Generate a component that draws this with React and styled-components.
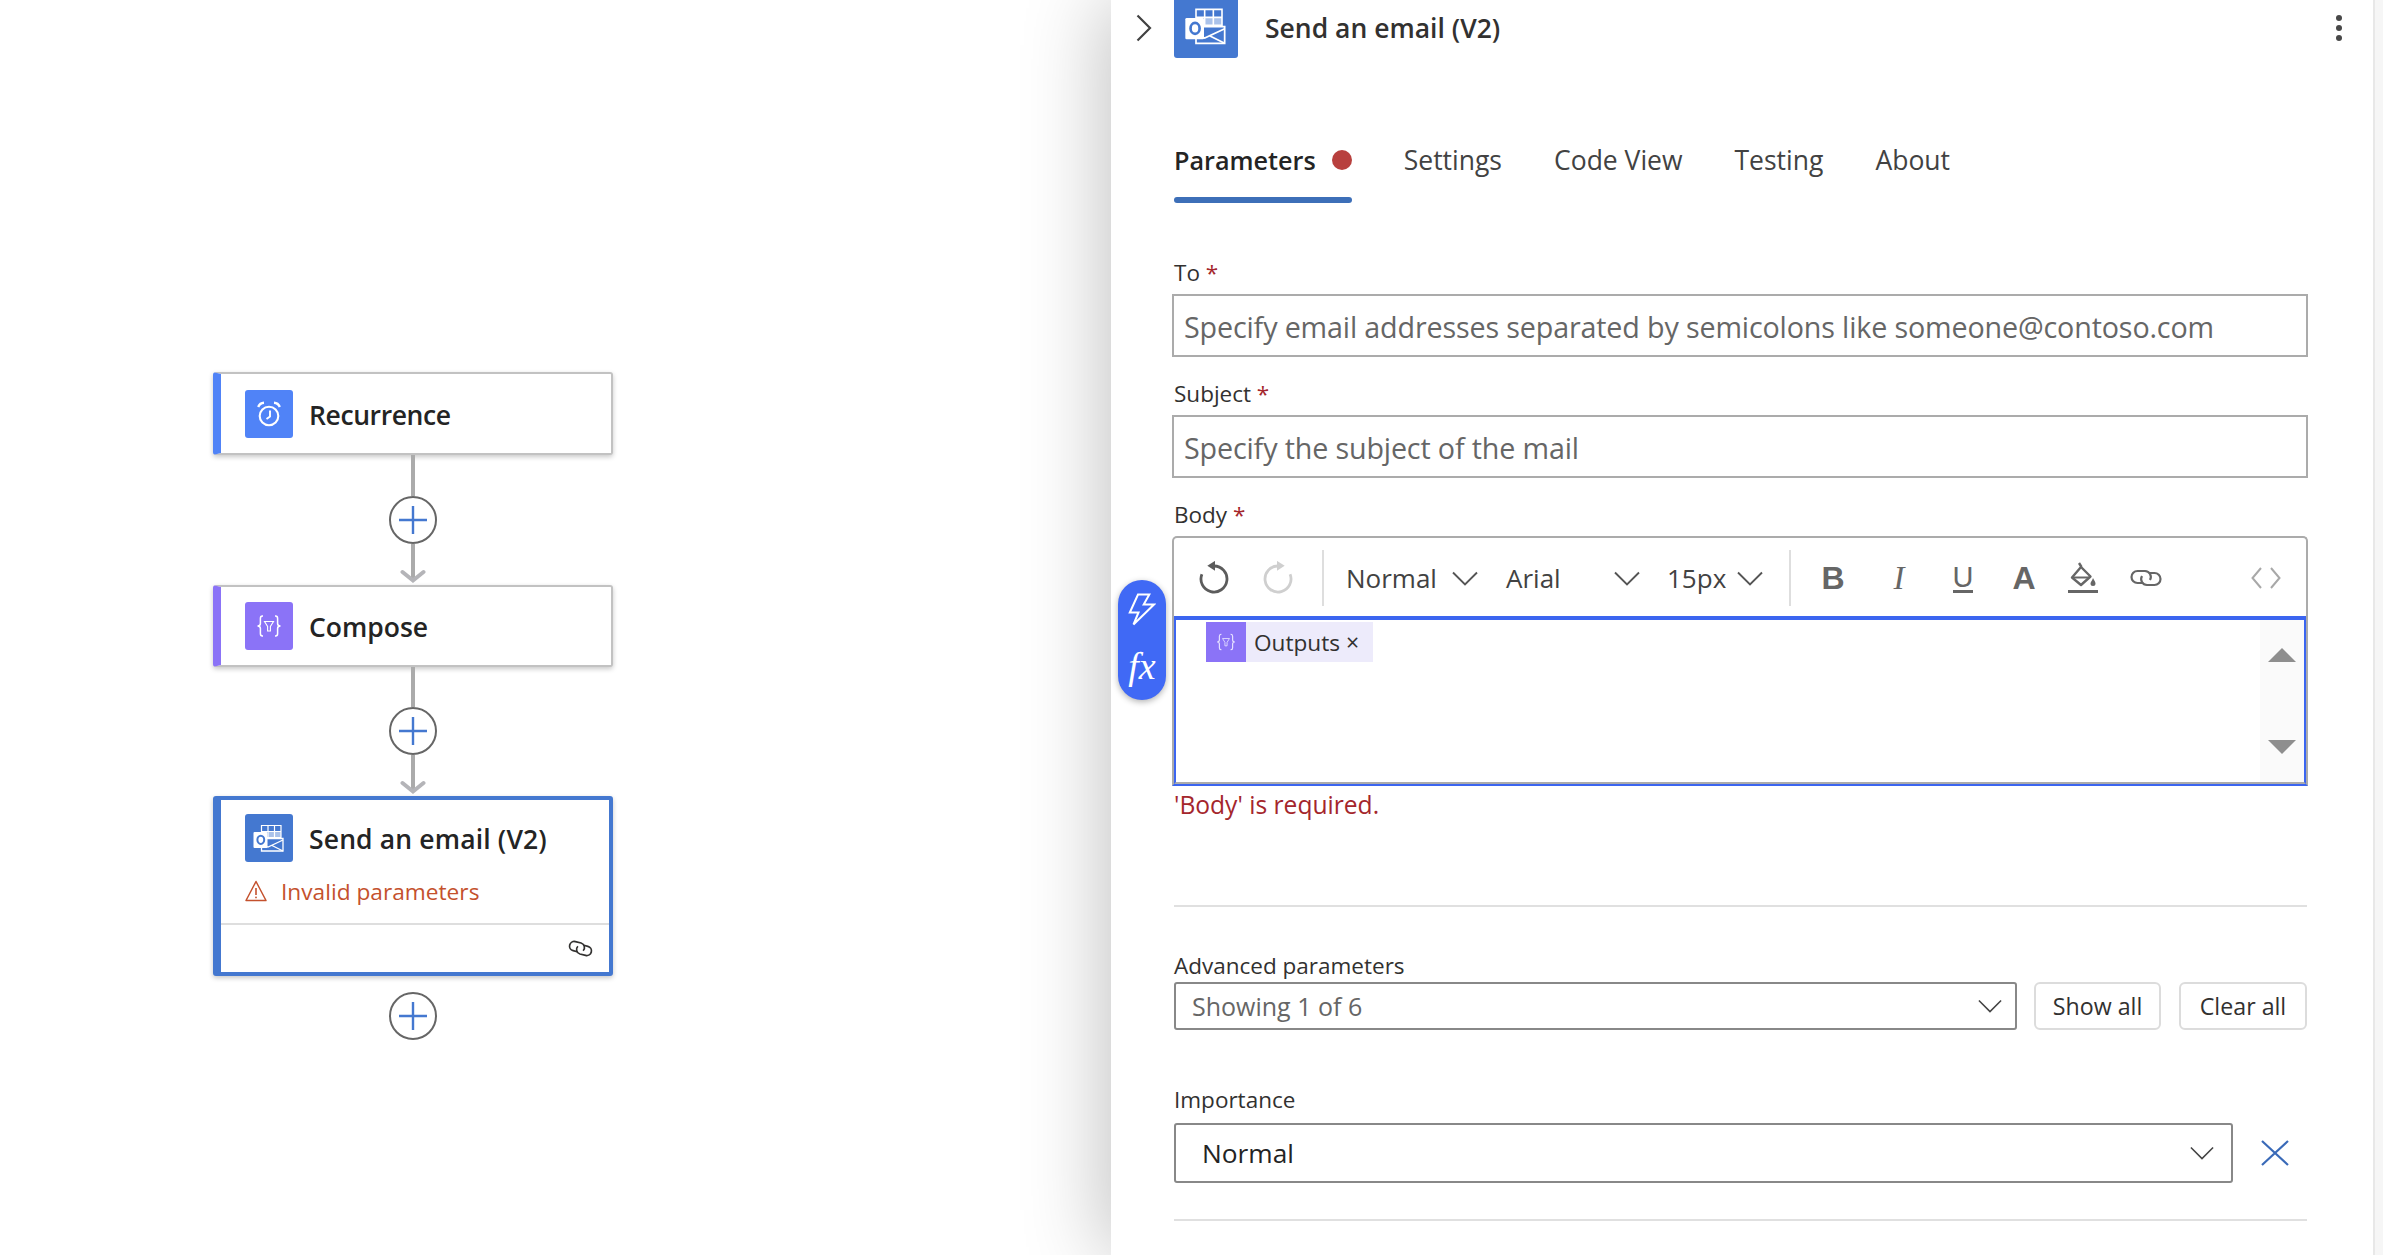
import React from 'react'
import styled, { createGlobalStyle } from 'styled-components'

const GlobalStyle = createGlobalStyle`
  html, body {
    margin: 0;
    padding: 0;
    background: #ffffff;
  }
  body {
    font-family: "Open Sans", "Noto Sans", sans-serif;
    color: #242424;
  }
`

const Page = styled.div`
  display: flex;
  width: 2383px;
  height: 1255px;
  overflow: hidden;
  background: #ffffff;
`

/* left side: the flow designer */
const Canvas = styled.div`
  flex: 0 0 1111px;
  padding: 372px 0 0 213px;
  box-sizing: border-box;
`

const NodeColumn = styled.div`
  display: flex;
  flex-direction: column;
  align-items: center;
  width: 400px;
`

const Card = styled.div`
  width: 100%;
  box-sizing: border-box;
  background: #ffffff;
  border: ${p => (p.$selected ? '4px' : '2px')} solid ${p => (p.$selected ? '#4478d0' : '#c2c2c2')};
  border-left: 8px solid ${p => p.$accent};
  border-radius: 3px;
  box-shadow: 0 2px 5px rgba(0, 0, 0, 0.22);
`

const CardHead = styled.div`
  display: flex;
  align-items: center;
  gap: 16px;
  height: ${p => p.$height}px;
  padding-left: 24px;
`

const IconBox = styled.span`
  display: flex;
  align-items: center;
  justify-content: center;
  flex: none;
  width: ${p => p.$size}px;
  height: ${p => p.$size}px;
  background: ${p => p.$color};
  border-radius: 3px;
`

const CardTitle = styled.span`
  margin-top: 2px;
  font-size: 26.5px;
  font-weight: 600;
  letter-spacing: ${p => p.$spacing || 0}px;
  color: #242424;
`

const WarningRow = styled.div`
  display: flex;
  align-items: center;
  gap: 14px;
  height: 32px;
  padding: 0 0 2px 24px;
  box-sizing: border-box;
  font-size: 22.7px;
  color: #c4512d;
`

const CardFooter = styled.div`
  display: flex;
  align-items: center;
  justify-content: flex-end;
  height: 47px;
  padding-right: 16px;
  border-top: 2px solid #dedede;
  margin-top: 15px;
`

const Connector = styled.div`
  display: flex;
  flex-direction: column;
  align-items: center;
  height: ${p => p.$height}px;
`

const Stem = styled.span`
  display: block;
  flex: 1;
  width: 4px;
  background: #ababab;
`

const ArrowStem = styled.svg`
  display: block;
  flex: none;
  width: 26px;
  height: 41px;
`

const AddButton = styled.button`
  display: flex;
  align-items: center;
  justify-content: center;
  flex: none;
  width: 48px;
  height: 48px;
  margin-top: ${p => p.$top || 0}px;
  padding: 0;
  background: #ffffff;
  border: 2px solid #666666;
  border-radius: 50%;
`

/* right side: the details panel */
const Panel = styled.div`
  flex: 0 0 1261px;
  box-sizing: border-box;
  padding: 0 66px 0 63px;
  background: #ffffff;
  box-shadow: -8px 0 76px rgba(0, 0, 0, 0.24);
  position: relative;
  z-index: 1;
`

const RightStrip = styled.div`
  flex: 1;
  background: #f6f6f6;
  border-left: 2px solid #e8e8e8;
  position: relative;
  z-index: 2;
`

const PanelHeader = styled.div`
  display: flex;
  align-items: center;
  height: 58px;
  margin-left: -38px;
`

const CollapseButton = styled.span`
  display: flex;
  flex: none;
  width: 38px;
  margin-top: -2px;
`

const HeaderLogo = styled(IconBox)`
  align-self: flex-end;
`

const PanelTitle = styled.span`
  flex: 1;
  margin: -2px 0 0 27px;
  font-size: 26.5px;
  font-weight: 600;
  color: #323130;
`

const MoreDots = styled.span`
  display: flex;
  flex-direction: column;
  gap: 4px;
  margin-right: -35px;
  margin-top: -2px;

  i {
    display: block;
    width: 6px;
    height: 6px;
    border-radius: 50%;
    background: #484848;
  }
`

const TabBar = styled.div`
  display: flex;
  gap: 52px;
  margin-top: 82px;
`

const Tab = styled.div`
  display: flex;
  flex-direction: column;
  color: ${p => (p.$active ? '#242424' : '#424242')};
  font-size: ${p => (p.$active ? 25.2 : 26.5)}px;
  font-weight: ${p => (p.$active ? 600 : 400)};
`

const TabLabel = styled.span`
  display: flex;
  align-items: center;
  gap: 16px;
  height: 40px;
  margin-bottom: 17px;
`

const TabMark = styled.span`
  display: block;
  height: 6px;
  border-radius: 3px;
  background: ${p => (p.$active ? '#3d6fb8' : 'transparent')};
`

const ErrorDot = styled.span`
  display: block;
  width: 20px;
  height: 20px;
  border-radius: 50%;
  background: #b8403e;
`

const Label = styled.label`
  display: block;
  height: 22px;
  margin-top: ${p => p.$top}px;
  margin-bottom: ${p => p.$bottom}px;
  font-size: 22.5px;
  line-height: 21px;
  color: #323130;

  b {
    font-weight: 400;
    color: #a4262c;
  }
`

const TextInput = styled.input`
  display: block;
  width: 1136px;
  height: 63px;
  margin: 0 -2px;
  padding: 2px 11px 0 10px;
  box-sizing: border-box;
  border: 2px solid #ababab;
  border-radius: 0;
  font-family: inherit;
  font-size: 28.7px;
  letter-spacing: -0.15px;

  &::placeholder {
    color: #666666;
    opacity: 1;
  }
`

const Editor = styled.div`
  display: flex;
  flex-direction: column;
  width: 1136px;
  height: 250px;
  margin: 0 -2px;
  box-sizing: border-box;
  border: 2px solid #ababab;
  border-bottom-color: #3b65f0;
  border-radius: 5px 5px 0 0;
  position: relative;
`

const Toolbar = styled.div`
  display: flex;
  align-items: center;
  flex: none;
  height: 78px;
  padding-top: 2px;
  box-sizing: border-box;
  color: #424242;
  font-size: 26px;
`

const ToolSlot = styled.span`
  display: flex;
  align-items: center;
  justify-content: center;
  flex: none;
  width: ${p => p.$width}px;
  margin-left: ${p => p.$left || 0}px;
  color: ${p => p.$color || '#666666'};
`

const ToolDivider = styled.span`
  display: block;
  flex: none;
  width: 2px;
  height: 56px;
  margin-left: ${p => p.$left}px;
  background: #dedede;
`

const ToolSelect = styled.span`
  display: flex;
  align-items: center;
  justify-content: space-between;
  flex: none;
  width: ${p => p.$width}px;
  margin-left: ${p => p.$left}px;
`

const GlyphBold = styled.span`
  font-family: "Liberation Sans", sans-serif;
  font-size: 32px;
  font-weight: 700;
  line-height: 1;
`

const GlyphItalic = styled.span`
  font-family: "Liberation Serif", serif;
  font-size: 33px;
  font-style: italic;
  line-height: 1;
`

const GlyphUnder = styled.span`
  font-family: "Liberation Sans", sans-serif;
  font-size: 29px;
  line-height: 26px;
  border-bottom: 3px solid #666666;
`

const RichBody = styled.div`
  display: flex;
  flex: 1;
  justify-content: space-between;
  min-height: 0;
  border: solid #3b65f0;
  border-width: 4px 2px 0;
  border-bottom: 2px solid #ababab;
`

const Token = styled.span`
  display: flex;
  align-items: center;
  align-self: flex-start;
  height: 40px;
  margin: 2px 0 0 30px;
  padding-right: 14px;
  background: #edebfb;
  font-size: 22.6px;
  color: #323130;
`

const TokenIcon = styled.span`
  display: flex;
  align-items: center;
  justify-content: center;
  width: 40px;
  height: 40px;
  margin-right: 8px;
  background: #8b73f7;
`

const TokenClose = styled.span`
  margin-left: 6px;
  font-size: 23px;
`

const ScrollTrack = styled.div`
  display: flex;
  flex-direction: column;
  align-items: center;
  justify-content: space-between;
  width: 44px;
  padding: 28px 0;
  box-sizing: border-box;
  background: #fafafa;
`

const ScrollArrow = styled.span`
  display: block;
  width: 0;
  height: 0;
  border-left: 14px solid transparent;
  border-right: 14px solid transparent;
  ${p => (p.$down ? 'border-top' : 'border-bottom')}: 14px solid #8e8e8e;
`

const TokenRail = styled.div`
  position: absolute;
  left: -56px;
  top: 42px;
  display: flex;
  flex-direction: column;
  align-items: center;
  width: 48px;
  height: 120px;
  padding-top: 13px;
  box-sizing: border-box;
  background: #4069f5;
  border-radius: 24px;
  box-shadow: 0 2px 6px rgba(0, 0, 0, 0.3);
  color: #ffffff;
`

const FxGlyph = styled.span`
  margin-top: 19px;
  font-family: "Liberation Serif", serif;
  font-size: 38px;
  font-style: italic;
  line-height: 40px;
`

const ErrorText = styled.div`
  margin-top: 4px;
  font-size: 24.6px;
  line-height: 30px;
  color: #a4262c;
`

const Divider = styled.hr`
  height: 2px;
  margin: ${p => p.$top}px 0 0;
  border: 0;
  background: #e0e0e0;
`

const Row = styled.div`
  display: flex;
  align-items: center;
`

const Select = styled.div`
  display: flex;
  align-items: center;
  justify-content: space-between;
  flex: none;
  width: ${p => p.$width}px;
  height: ${p => p.$height}px;
  padding: 0 ${p => p.$end}px 0 ${p => p.$inset}px;
  box-sizing: border-box;
  border: 2px solid #888888;
  border-radius: 3px;
  color: ${p => p.$color};
  font-size: ${p => p.$size}px;
`

const PlainButton = styled.button`
  flex: none;
  width: ${p => p.$width}px;
  height: 48px;
  margin-left: ${p => p.$left}px;
  padding: 0;
  background: #ffffff;
  border: 2px solid #dcdcdc;
  border-radius: 6px;
  font-family: inherit;
  font-size: 23.2px;
  color: #323130;
`

const RemoveButton = styled.span`
  display: flex;
  flex: none;
  margin-left: 28px;
`

const Chevron = ({ width = 26, color = '#555555', weight = 1.9 }) => (
  <svg width={width} height={width / 2 + 2} viewBox="0 0 26 15" fill="none">
    <path d="M1 1.5 L13 13.5 L25 1.5" stroke={color} strokeWidth={weight} />
  </svg>
)

const Plus = () => (
  <svg width="30" height="30" viewBox="0 0 30 30">
    <path d="M1 15 H29 M15 1 V29" stroke="#4478d0" strokeWidth="2.4" />
  </svg>
)

const Arrow = () => (
  <ArrowStem viewBox="0 0 26 41">
    <path d="M13 0 V37" stroke="#ababab" strokeWidth="4" />
    <path d="M2.5 28 L13 36.5 L23.5 28" fill="none" stroke="#b4b4b8" strokeWidth="4" strokeLinecap="round" />
  </ArrowStem>
)

const ClockIcon = () => (
  <svg width="26" height="26" viewBox="0 0 26 26" fill="none" stroke="#ffffff">
    <circle cx="13" cy="15" r="9.3" strokeWidth="2.1" />
    <path d="M14 9.5 V15.5 L10.5 18" strokeWidth="1.9" />
    <path d="M2.2 6 Q3.8 2 8 1.8 M23.8 6 Q22.2 2 18 1.8" strokeWidth="2.4" />
  </svg>
)

const ComposeIcon = ({ size = 26, color = '#ffffff' }) => (
  <svg width={size} height={size} viewBox="0 0 26 26" fill="none" stroke={color} strokeWidth="1.5">
    <path d="M7 3 H6.4 Q4.4 3 4.4 5.5 V10.5 Q4.4 13 1.5 13 Q4.4 13 4.4 15.5 V20.5 Q4.4 23 6.4 23 H7" />
    <path d="M19 3 H19.6 Q21.6 3 21.6 5.5 V10.5 Q21.6 13 24.5 13 Q21.6 13 21.6 15.5 V20.5 Q21.6 23 19.6 23 H19" />
    <path d="M8.5 8.5 H17.5 L14.4 13.5 V18 H11.6 V13.5 Z" strokeWidth="1.1" />
  </svg>
)

const OutlookIcon = ({ size }) => (
  <svg width={size} height={size} viewBox="0 0 48 48" fill="none">
    <path d="M16.5 11.5 H36 V29 H16.5 Z M23 11.5 V29 M29.5 11.5 V29 M16.5 17.5 H36 M16.5 23.5 H36" stroke="#ffffff" strokeWidth="1.2" />
    <path d="M23 18 H29.5 V23.5 H23 Z M30 18 H36 V23.5 H30 Z" fill="#ffffff" opacity="0.55" />
    <path d="M16.5 24.5 H38 V37 H16.5 Z" fill="#4478d0" stroke="#ffffff" strokeWidth="1.3" />
    <path d="M16.5 30.5 L23 33 L38 26 M27 31.5 L38 37" stroke="#ffffff" strokeWidth="1.3" />
    <rect x="8.5" y="18" width="14" height="16" rx="1" fill="#ffffff" />
    <ellipse cx="15.8" cy="25.8" rx="3.4" ry="4.1" stroke="#4478d0" strokeWidth="2" />
  </svg>
)

const WarningIcon = () => (
  <svg width="22" height="22" viewBox="0 0 22 22" fill="none" stroke="#c4512d">
    <path d="M11 1.5 L21 20.5 H1 Z" strokeWidth="1.5" strokeLinejoin="round" />
    <path d="M11 8 V15" strokeWidth="1.6" />
    <circle cx="11" cy="17.4" r="0.9" fill="#c4512d" stroke="none" />
  </svg>
)

const ChainIcon = ({ width, height, color, weight, tilt = 0 }) => (
  <svg width={width} height={height} viewBox="0 0 32 20" fill="none" stroke={color} strokeWidth={weight}>
    <g transform={`rotate(${tilt} 16 10)`}>
      <path d="M13 15 H7.5 A6 6 0 0 1 7.5 3 H15 A6 6 0 0 1 20 12" />
      <path d="M19 5 H24.5 A6 6 0 0 1 24.5 17 H17 A6 6 0 0 1 12 8" />
    </g>
  </svg>
)

const UndoGlyph = styled.svg`
  transform: ${p => (p.$flip ? 'scaleX(-1)' : 'none')};
`

const UndoIcon = ({ color, flip }) => (
  <UndoGlyph $flip={flip} width="30" height="34" viewBox="-2 1 30 34" fill="none">
    <path d="M13 6 A13 13 0 1 1 0.9 14.2" stroke={color} strokeWidth="2.8" />
    <path d="M6.3 5.7 L14 0.9 V10.7 Z" fill={color} />
  </UndoGlyph>
)

const FillIcon = () => (
  <svg width="30" height="32" viewBox="0 0 30 32" fill="none">
    <path d="M11 1 L13.5 5" stroke="#666666" strokeWidth="2.4" />
    <path d="M13 5 L22.5 14.5 L13 23 L4 15.5 Z" stroke="#666666" strokeWidth="2.4" strokeLinejoin="round" />
    <path d="M5 15.5 H21" stroke="#666666" strokeWidth="2" />
    <path d="M25 16 C26.5 19 27.5 20 27.5 21.5 A2.5 2.5 0 0 1 22.5 21.5 C22.5 20 24 19 25 16 Z" fill="#666666" />
    <path d="M0 29.5 H30" stroke="#666666" strokeWidth="3" />
  </svg>
)

const CodeIcon = () => (
  <svg width="30" height="22" viewBox="0 0 30 22" fill="none" stroke="#a8a8a8" strokeWidth="2">
    <path d="M10 1 L1.5 11 L10 21 M20 1 L28.5 11 L20 21" />
  </svg>
)

const BoltIcon = () => (
  <svg width="28" height="34" viewBox="0 0 28 34" fill="none" stroke="#ffffff" strokeWidth="2" strokeLinejoin="miter">
    <path d="M10 1.5 H21.3 L15.7 11.5 H26 L5.5 31.5 L10.5 19.5 H1.8 Z" />
  </svg>
)

const tabs = ['Settings', 'Code View', 'Testing', 'About']

function FlowCanvas() {
  return (
    <Canvas>
      <NodeColumn>
        <Card $accent="#5083f7">
          <CardHead $height={79}>
            <IconBox $size={48} $color="#5083f7"><ClockIcon /></IconBox>
            <CardTitle $spacing={-0.4}>Recurrence</CardTitle>
          </CardHead>
        </Card>
        <Connector $height={130}>
          <Stem />
          <AddButton><Plus /></AddButton>
          <Arrow />
        </Connector>
        <Card $accent="#8b73f7">
          <CardHead $height={78}>
            <IconBox $size={48} $color="#8b73f7"><ComposeIcon /></IconBox>
            <CardTitle>Compose</CardTitle>
          </CardHead>
        </Card>
        <Connector $height={129}>
          <Stem />
          <AddButton><Plus /></AddButton>
          <Arrow />
        </Connector>
        <Card $accent="#4478d0" $selected>
          <CardHead $height={76}>
            <IconBox $size={48} $color="#4478d0"><OutlookIcon size={48} /></IconBox>
            <CardTitle $spacing={0.15}>Send an email (V2)</CardTitle>
          </CardHead>
          <WarningRow>
            <WarningIcon />
            Invalid parameters
          </WarningRow>
          <CardFooter>
            <ChainIcon width={25} height={17} color="#323130" weight={2.2} tilt={14} />
          </CardFooter>
        </Card>
        <AddButton $top={16}><Plus /></AddButton>
      </NodeColumn>
    </Canvas>
  )
}

function BodyEditor() {
  return (
    <Editor>
      <TokenRail>
        <BoltIcon />
        <FxGlyph>fx</FxGlyph>
      </TokenRail>
      <Toolbar>
        <ToolSlot $width={30} $left={25}><UndoIcon color="#5c5c5c" /></ToolSlot>
        <ToolSlot $width={30} $left={34}><UndoIcon color="#cfcfcf" flip /></ToolSlot>
        <ToolDivider $left={29} />
        <ToolSelect $width={132} $left={22}>Normal <Chevron /></ToolSelect>
        <ToolSelect $width={134} $left={28}>Arial <Chevron /></ToolSelect>
        <ToolSelect $width={96} $left={27}>15px <Chevron /></ToolSelect>
        <ToolDivider $left={26} />
        <ToolSlot $width={24} $left={30}><GlyphBold>B</GlyphBold></ToolSlot>
        <ToolSlot $width={20} $left={44}><GlyphItalic>I</GlyphItalic></ToolSlot>
        <ToolSlot $width={24} $left={42}><GlyphUnder>U</GlyphUnder></ToolSlot>
        <ToolSlot $width={24} $left={37}><GlyphBold>A</GlyphBold></ToolSlot>
        <ToolSlot $width={30} $left={32}><FillIcon /></ToolSlot>
        <ToolSlot $width={32} $left={32}><ChainIcon width={32} height={20} color="#666666" weight={2.2} /></ToolSlot>
        <ToolSlot $width={30} $left={89}><CodeIcon /></ToolSlot>
      </Toolbar>
      <RichBody>
        <Token>
          <TokenIcon><ComposeIcon size={20} color="#e8e4ff" /></TokenIcon>
          Outputs
          <TokenClose>×</TokenClose>
        </Token>
        <ScrollTrack>
          <ScrollArrow />
          <ScrollArrow $down />
        </ScrollTrack>
      </RichBody>
    </Editor>
  )
}

function DetailsPanel() {
  return (
    <Panel>
      <PanelHeader>
        <CollapseButton>
          <svg width="16" height="28" viewBox="0 0 16 28" fill="none">
            <path d="M1.5 1.5 L14 14 L1.5 26.5" stroke="#424242" strokeWidth="2.2" />
          </svg>
        </CollapseButton>
        <HeaderLogo $size={64} $color="#4478d0"><OutlookIcon size={64} /></HeaderLogo>
        <PanelTitle>Send an email (V2)</PanelTitle>
        <MoreDots><i /><i /><i /></MoreDots>
      </PanelHeader>

      <TabBar>
        <Tab $active>
          <TabLabel>Parameters <ErrorDot /></TabLabel>
          <TabMark $active />
        </Tab>
        {tabs.map(tab => (
          <Tab key={tab}>
            <TabLabel>{tab}</TabLabel>
            <TabMark />
          </Tab>
        ))}
      </TabBar>

      <Label $top={59} $bottom={10}>To <b>*</b></Label>
      <TextInput placeholder="Specify email addresses separated by semicolons like someone@contoso.com" />
      <Label $top={26} $bottom={10}>Subject <b>*</b></Label>
      <TextInput placeholder="Specify the subject of the mail" />
      <Label $top={26} $bottom={10}>Body <b>*</b></Label>
      <BodyEditor />
      <ErrorText>'Body' is required.</ErrorText>

      <Divider $top={85} />

      <Label $top={48} $bottom={5}>Advanced parameters</Label>
      <Row>
        <Select $width={843} $height={48} $inset={16} $end={13} $color="#666666" $size={25}>
          Showing 1 of 6
          <Chevron width={24} color="#444444" weight={1.7} />
        </Select>
        <PlainButton $left={17} $width={127}>Show all</PlainButton>
        <PlainButton $left={18} $width={128}>Clear all</PlainButton>
      </Row>

      <Label $top={59} $bottom={12}>Importance</Label>
      <Row>
        <Select $width={1059} $height={60} $inset={26} $end={17} $color="#242424" $size={26.3}>
          Normal
          <Chevron width={24} color="#444444" weight={1.7} />
        </Select>
        <RemoveButton>
          <svg width="28" height="26" viewBox="0 0 28 26" fill="none">
            <path d="M1 1 L27 25 M27 1 L1 25" stroke="#3a6ab8" strokeWidth="2.2" />
          </svg>
        </RemoveButton>
      </Row>

      <Divider $top={36} />
    </Panel>
  )
}

export default function App() {
  return (
    <>
      <GlobalStyle />
      <Page>
        <FlowCanvas />
        <DetailsPanel />
        <RightStrip />
      </Page>
    </>
  )
}
